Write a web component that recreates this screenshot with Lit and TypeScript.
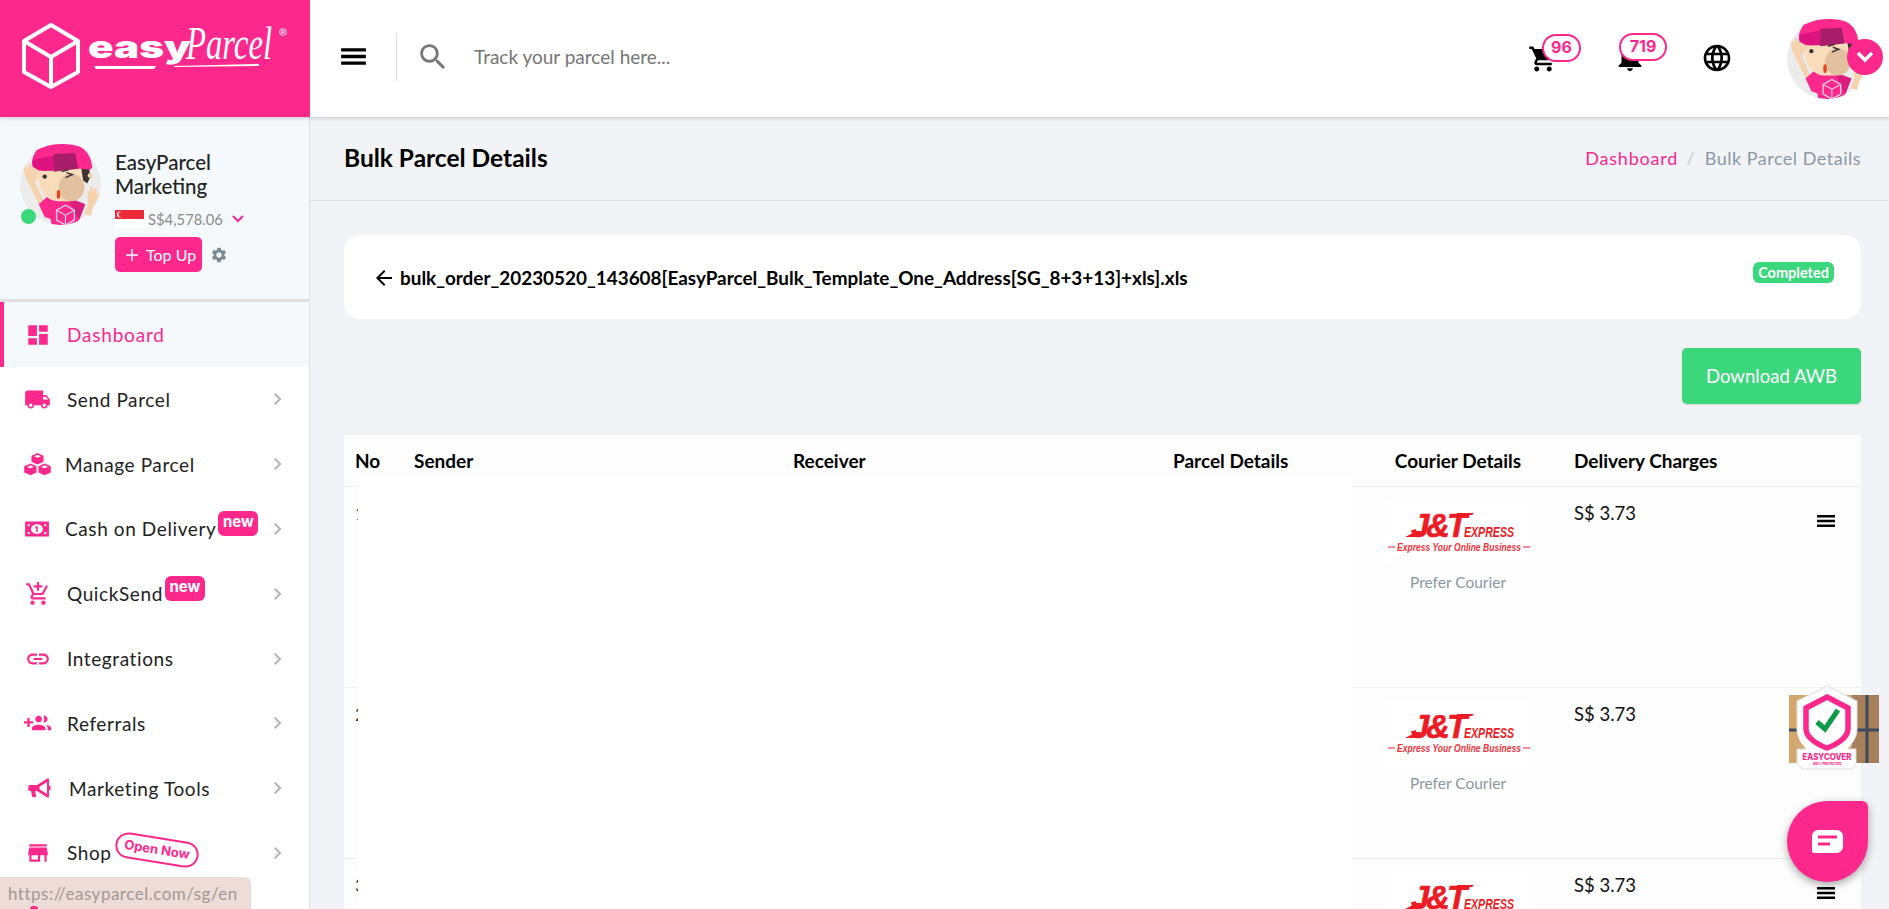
import { LitElement, css, html, svg } from "lit";
import { customElement } from "lit/decorators.js";

const icons: Record<string, any> = {
  dashboard: svg`<path d="M3 13h8V3H3v10zm0 8h8v-6H3v6zm10 0h8V11h-8v10zm0-18v6h8V3h-8z"/>`,
  truck: svg`<path d="M20 8h-3V4H3c-1.100 0-2 .9-2 2v11h2c0 1.660 1.340 3 3 3s3-1.340 3-3h6c0 1.660 1.340 3 3 3s3-1.340 3-3h2v-5l-3-4zM6 18.500c-.83 0-1.500-.67-1.500-1.500s.67-1.500 1.500-1.500 1.500.67 1.500 1.500-.67 1.500-1.500 1.500zm13.500-9l1.960 2.500H17V9.500h2.500zm-1.500 9c-.83 0-1.500-.67-1.500-1.500s.67-1.500 1.500-1.500 1.500.67 1.500 1.500-.67 1.500-1.500 1.500z"/>`,
  cubes: svg`<path d="M12 2.500l5 2.200v5l-5 2.200-5-2.200v-5z"/><path d="M6.200 11.200l5 2.200v5.200l-5 2.300-5.200-2.300v-5.200z"/><path d="M17.800 11.200l5.200 2.200v5.200l-5.200 2.300-5-2.300v-5.200z"/><path fill="#fff" d="M12 4l2.800 1.200L12 6.500 9.200 5.200zM6.200 12.700L9 14l-2.800 1.200L3.400 14zM17.800 12.700l2.900 1.300-2.900 1.200L15 14z"/>`,
  cash: svg`<path fill-rule="evenodd" d="M1 5h22v14H1zM12 7.500c-3.200 0-5.500 2-5.500 4.500s2.300 4.500 5.500 4.500 5.500-2 5.500-4.500-2.300-4.500-5.500-4.500zM3.500 7.500v2c1.200 0 2-.8 2-2zm17 0h-2c0 1.200.8 2 2 2zm-17 9h2c0-1.200-.8-2-2-2zm17 0v-2c-1.200 0-2 .8-2 2z"/><path d="M11 9.500h1.700v5h-1.500v-3.500l-.8.3v-1.100z"/>`,
  cartPlus: svg`<path d="M11 9h2V6h3V4h-3V1h-2v3H8v2h3v3zm-4 9c-1.100 0-1.990.9-1.990 2S5.900 22 7 22s2-.9 2-2-.9-2-2-2zm10 0c-1.100 0-1.990.9-1.990 2s.89 2 1.990 2 2-.9 2-2-.9-2-2-2zm-9.830-3.250l.03-.12.9-1.630h7.450c.75 0 1.410-.41 1.750-1.030l3.860-7.010L19.420 4h-.01l-1.100 2-2.760 5H8.530l-.13-.27L6.160 6l-.95-2-.94-2H1v2h2l3.600 7.590-1.350 2.450c-.16.28-.25.61-.25.96 0 1.100.9 2 2 2h12v-2H7.420c-.13 0-.25-.11-.25-.25z"/>`,
  link: svg`<path d="M3.900 12c0-1.710 1.390-3.100 3.100-3.100h4V7H7c-2.760 0-5 2.240-5 5s2.240 5 5 5h4v-1.900H7c-1.710 0-3.100-1.390-3.100-3.100zM8 13h8v-2H8v2zm9-6h-4v1.900h4c1.710 0 3.100 1.390 3.100 3.100s-1.390 3.100-3.100 3.100h-4V17h4c2.760 0 5-2.240 5-5s-2.240-5-5-5z"/>`,
  groupAdd: svg`<path d="M8 10H5V7H3v3H0v2h3v3h2v-3h3v-2zm10 1c1.660 0 2.990-1.340 2.990-3S19.660 5 18 5c-.32 0-.63.05-.91.14.57.81.9 1.790.9 2.860s-.34 2.040-.9 2.860c.28.09.59.14.91.14zm-5 0c1.660 0 2.990-1.340 2.990-3S14.660 5 13 5s-3 1.340-3 3 1.340 3 3 3zm6.620 2.160c.83.73 1.380 1.660 1.380 2.840v2h3v-2c0-1.540-2.370-2.490-4.380-2.840zM13 13c-2 0-6 1-6 3v2h12v-2c0-2-4-3-6-3z"/>`,
  horn: svg`<path fill-rule="evenodd" d="M22 2.500h-1.800L10 9H3c-1 0-1.700.8-1.700 1.800v2.400c0 1 .7 1.800 1.700 1.800h1l1.300 6h4l-1.200-6H10l10.200 6.500H22zM20 6v12l-7.500-4.700v-2.600z"/><path d="M22 10h1.500v4H22z"/>`,
  store: svg`<path d="M20 4H4v2h16V4zm1 10v-2l-1-5H4l-1 5v2h1v6h10v-6h4v6h2v-6h1zm-9 4H6v-4h6v4z"/>`,
  chevron: svg`<path d="M9 5l7 7-7 7" fill="none" stroke="currentColor" stroke-width="3"/>`,
  search: svg`<path d="M15.500 14h-.79l-.28-.27C15.410 12.590 16 11.110 16 9.500 16 5.910 13.090 3 9.500 3S3 5.910 3 9.500 5.910 16 9.500 16c1.610 0 3.090-.59 4.230-1.570l.27.28v.79l5 4.990L20.490 19l-4.990-5zm-6 0C7.010 14 5 11.990 5 9.500S7.010 5 9.500 5 14 7.010 14 9.500 11.990 14 9.500 14z"/>`,
  menu: svg`<path d="M3 18h18v-2.400H3zm0-4.800h18v-2.400H3zM3 6v2.400h18V6z"/>`,
  cart: svg`<path d="M7 18c-1.100 0-1.990.9-1.990 2S5.900 22 7 22s2-.9 2-2-.9-2-2-2zM1 2v2h2l3.600 7.590-1.350 2.450c-.16.29-.25.62-.25.96 0 1.100.9 2 2 2h12v-2H7.420c-.14 0-.25-.11-.25-.25l.03-.12.9-1.630h7.450c.75 0 1.410-.41 1.750-1.030l3.580-6.490A1 1 0 0 0 20 4H5.210l-.94-2H1zm16 16c-1.100 0-1.990.9-1.990 2s.89 2 1.990 2 2-.9 2-2-.9-2-2-2z"/>`,
  bell: svg`<path d="M12 22c1.100 0 2-.9 2-2h-4c0 1.100.89 2 2 2zm6-6v-5c0-3.070-1.640-5.640-4.500-6.320V4c0-.83-.67-1.500-1.500-1.500s-1.500.67-1.500 1.500v.68C7.630 5.360 6 7.920 6 11v5l-2 2v1h16v-1l-2-2z"/>`,
  globe: svg`<path d="M11.990 2C6.470 2 2 6.480 2 12s4.470 10 9.990 10C17.520 22 22 17.520 22 12S17.520 2 11.990 2zm6.930 6h-2.950c-.32-1.250-.78-2.450-1.380-3.560 1.840.63 3.370 1.910 4.330 3.560zM12 4.040c.83 1.200 1.480 2.530 1.910 3.960h-3.820c.43-1.430 1.080-2.760 1.910-3.960zM4.260 14C4.100 13.360 4 12.690 4 12s.1-1.360.26-2h3.380c-.08.66-.14 1.320-.14 2 0 .68.06 1.340.14 2H4.260zm.82 2h2.950c.32 1.250.78 2.450 1.380 3.560-1.840-.63-3.370-1.900-4.330-3.560zm2.950-8H5.080c.96-1.660 2.490-2.930 4.330-3.560C8.810 5.550 8.350 6.750 8.030 8zM12 19.960c-.83-1.200-1.480-2.530-1.910-3.960h3.820c-.43 1.430-1.080 2.760-1.910 3.960zM14.340 14H9.660c-.09-.66-.16-1.320-.16-2 0-.68.07-1.350.16-2h4.680c.09.65.16 1.320.16 2 0 .68-.07 1.340-.16 2zm.25 5.560c.6-1.110 1.060-2.310 1.380-3.560h2.950c-.96 1.650-2.490 2.930-4.330 3.560zM16.360 14c.08-.66.14-1.320.14-2 0-.68-.06-1.340-.14-2h3.380c.16.64.26 1.310.26 2s-.1 1.360-.26 2h-3.380z"/>`,
  gear: svg`<path d="M19.140 12.940c.04-.3.06-.61.06-.94 0-.32-.02-.64-.07-.94l2.030-1.580c.18-.14.23-.41.12-.61l-1.920-3.320c-.12-.22-.37-.29-.59-.22l-2.390.96c-.5-.38-1.030-.7-1.620-.94l-.36-2.540c-.04-.24-.24-.41-.48-.41h-3.840c-.24 0-.43.17-.47.41l-.36 2.540c-.59.24-1.130.57-1.620.94l-2.390-.96c-.22-.08-.47 0-.59.22L2.740 8.870c-.12.21-.08.47.12.61l2.030 1.580c-.05.3-.09.63-.09.94s.02.64.07.94l-2.030 1.580c-.18.14-.23.41-.12.61l1.920 3.320c.12.22.37.29.59.22l2.390-.96c.5.38 1.030.7 1.620.94l.36 2.540c.05.24.24.41.48.41h3.840c.24 0 .44-.17.47-.41l.36-2.540c.59-.24 1.130-.56 1.620-.94l2.390.96c.22.08.47 0 .59-.22l1.920-3.320c.12-.22.07-.47-.12-.61l-2.010-1.580zM12 15.600c-1.980 0-3.600-1.620-3.600-3.600s1.620-3.600 3.600-3.600 3.600 1.620 3.600 3.600-1.620 3.600-3.600 3.600z"/>`,
  back: svg`<path d="M20 11H7.800l5.600-5.600L12 4l-8 8 8 8 1.400-1.400L7.800 13H20z"/>`,
};

const icon = (name: string, size: number, cls = "") =>
  html`<svg class=${cls} width=${size} height=${size} viewBox="0 0 24 24" fill="currentColor">${icons[name]}</svg>`;

// the winking mascot, drawn in the 110px grid of the sidebar crop
const mascot = (id: string, size: number) => html`
  <svg width=${size} height=${size} viewBox="9 14 82 82">
    <defs><clipPath id=${id}><circle cx="50" cy="55" r="41" /></clipPath></defs>
    <circle cx="50" cy="55" r="41" fill="#ececec" />
    <path d="M13 38l2-2 2 3 0-5 3 0 1 5 2-5 3 1-1 7 3-2 1 2-3 8-2 2 9 20-4 5-12-25-3-6z" fill="#f5d3ae" />
    <path d="M77 62l1-1 2 2 0-6 2 0 1 5 2-4 2 1-1 5 2-1 1 1-3 9-3 4-2 10-7-2 4-11z" fill="#f5d3ae" />
    <g clip-path="url(#${id})">
      <path d="M28 75l9-8 26 3 12 5-7 17-5 9H42l-2-11-6-2z" fill="#fd288c" />
      <path d="M58 70l17 5-6 16z" fill="#d91d7c" />
      <path d="M55 76l9 5v10l-9 5-9-5V81z" fill="none" stroke="#f8d6e6" stroke-width="1.300" />
      <path d="M46 81l9 5 9-5M55 86v10" fill="none" stroke="#f8d6e6" stroke-width="1.100" />
    </g>
    <path d="M27 38h46l2 22-15 12H47c-9 0-18-9-19-19z" fill="#f9dcbc" />
    <path d="M71 38l8 0 1 10-3 6-4-3-1-6z" fill="#3d3330" />
    <circle cx="80" cy="46" r="2.500" fill="#f5d3ae" />
    <ellipse cx="61" cy="58" rx="13" ry="14" fill="#e2c1a0" />
    <path d="M21 34c0-5 2-10 5-14 7-3 15-6 24-6 9 0 17 1 22 4 6 4 10 12 10 20l-2 2-20-2-25 3-7 0-6-4z" fill="#fd288c" />
    <path d="M22 30l21-4v15l-11 0-10-4z" fill="#dd127f" />
    <path d="M43 24l22-1 3 16-25 3z" fill="#a91c69" />
    <circle cx="34" cy="47" r="2.200" fill="#3d3330" />
    <path d="M51 42l7-2M55 48l7-3-6-2" fill="none" stroke="#3d3330" stroke-width="1.500" />
    <ellipse cx="48" cy="65" rx="1.800" ry="4.500" fill="#e8431a" />
  </svg>
`;

const jtLogo = () => html`
  <svg class="jt" width="147" height="68" viewBox="0 0 147 68">
    <rect width="147" height="68" fill="#fff" />
    <path d="M20 39l12-6h4l-2 6z" fill="#ed1c24" />
    <text y="39" class="jt-main"><tspan x="26">J</tspan><tspan x="41">&amp;</tspan><tspan x="62">T</tspan></text>
    <path d="M72 15h17l-2 2H72zM72 18h12l-2 2H72z" fill="#ed1c24" />
    <text x="79" y="39" class="jt-sub" textLength="50" lengthAdjust="spacingAndGlyphs">EXPRESS</text>
    <path d="M3 49h7M138 49h7" stroke="#ed1c24" stroke-width="1.200" />
    <text x="12" y="53" class="jt-tag" textLength="124" lengthAdjust="spacingAndGlyphs">Express Your Online Business</text>
  </svg>
`;

const menuItems = [
  { label: "Dashboard", icon: "dashboard", size: 26, iconX: 25, textX: 67, active: true },
  { label: "Send Parcel", icon: "truck", size: 27, iconX: 24, textX: 67 },
  { label: "Manage Parcel", icon: "cubes", size: 29, iconX: 23, textX: 65 },
  { label: "Cash on Delivery", icon: "cash", size: 26, iconX: 24, textX: 65, badge: "new" },
  { label: "QuickSend", icon: "cartPlus", size: 26, iconX: 25, textX: 67, badge: "new" },
  { label: "Integrations", icon: "link", size: 26, iconX: 25, textX: 67 },
  { label: "Referrals", icon: "groupAdd", size: 27, iconX: 24, textX: 67 },
  { label: "Marketing Tools", icon: "horn", size: 24, iconX: 27, textX: 69 },
  { label: "Shop", icon: "store", size: 26, iconX: 25, textX: 67, pill: "Open Now" },
];

const rows = [
  { no: 1, cls: "row-a" },
  { no: 2, cls: "row-b" },
  { no: 3, cls: "row-c" },
];

@customElement("app-root")
export class AppRoot extends LitElement {
  static styles = css`
    :host {
      --pink: #fd288c;
      --green: #3ad77b;
      display: block;
      position: relative;
      height: 909px;
      overflow: hidden;
      background: #f2f3f7;
      font-family: "Lato", "Liberation Sans", sans-serif;
      color: #111;
    }
    * { box-sizing: border-box; }
    svg { display: block; flex: none; }

    .topbar {
      position: relative;
      z-index: 2;
      display: flex;
      align-items: center;
      height: 117px;
      background: #fff;
      box-shadow: 0 1px 4px rgba(0, 0, 0, 0.2);
    }
    .brand { width: 310px; height: 117px; background: var(--pink); flex: none; }
    .brand text { fill: #fff; }
    .logo-easy { font: 900 31px "Inter", sans-serif; }
    .logo-parcel { font: italic 400 46px "Liberation Serif", serif; }
    .logo-r { font: 700 5px "Liberation Sans", sans-serif; }
    .find { display: flex; align-items: center; padding-bottom: 4px; height: 100%; }
    .burger { margin-left: 27px; color: #000; }
    .divider { width: 1px; height: 48px; background: #ddd; margin-left: 26px; }
    .search { margin-left: 19px; color: #777; }
    .placeholder { margin-left: 24px; font-size: 19px; color: #757575; }
    .tools { margin-left: auto; display: flex; align-items: center; height: 100%; }
    .tool { position: relative; color: #000; }
    .tool.cart { width: 30px; height: 30px; margin-right: 55px; }
    .tool.bell { width: 34px; height: 34px; margin: -3px 54px 0 0; }
    .tool.globe { width: 32px; height: 32px; margin-right: 54px; margin-top: -1px; }
    .count {
      position: absolute;
      height: 28px;
      border: 2px solid var(--pink);
      border-radius: 14px;
      background: #fff;
      color: var(--pink);
      font: 700 16px/22px "Inter", sans-serif;
      text-align: center;
    }
    .cart .count { top: -10px; left: 14px; width: 39px; }
    .bell .count { top: -7px; left: 6px; width: 48px; }
    .me { position: relative; width: 80px; height: 80px; margin-right: 22px; }
    .me-toggle {
      position: absolute;
      top: 20px;
      left: 60px;
      width: 36px;
      height: 36px;
      border-radius: 50%;
      background: var(--pink);
      display: flex;
      align-items: center;
      justify-content: center;
    }

    .layout { display: flex; height: 792px; }
    .sidebar {
      width: 310px;
      flex: none;
      background: #fff;
      border-right: 1px solid #dcdee2;
    }
    .profile {
      display: flex;
      height: 185px;
      padding: 27px 0 0 20px;
      background: #f5f9fc;
      border-bottom: 3px solid #e0e0e0;
    }
    .avatar { position: relative; width: 81px; height: 81px; flex: none; }
    .dot {
      position: absolute;
      left: 1px;
      top: 65px;
      width: 15px;
      height: 15px;
      border-radius: 50%;
      background: var(--green);
    }
    .who { margin-left: 14px; padding-top: 6px; }
    .name { font-size: 20.5px; font-weight: 500; line-height: 24px; color: #222; width: 130px; }
    .balance { display: flex; align-items: center; margin-top: 12px; font-size: 14.8px; color: #8b8b8b; height: 18px; }
    .flag { margin-right: 4px; }
    .caret { margin-left: 9px; color: var(--pink); }
    .actions { display: flex; align-items: center; margin-top: 9px; }
    .topup {
      display: flex;
      align-items: center;
      width: 87px;
      height: 35px;
      padding-left: 10px;
      border-radius: 5px;
      background: var(--pink);
      color: #fff;
      font-size: 16px;
    }
    .topup svg { margin-right: 7px; }
    .actions .gear { margin-left: 8px; color: #7b8994; }

    .item {
      display: flex;
      align-items: center;
      height: 64.8px;
      position: relative;
      font-size: 19px;
      letter-spacing: 0.6px;
      color: #222;
    }
    .item.active { height: 65px; background: #f5f9fc; border-left: 4px solid var(--pink); color: var(--pink); letter-spacing: 0.8px; }
    .item .ico { position: absolute; color: var(--pink); }
    .item .go { position: absolute; left: 268px; color: #b8b8b8; }
    .new {
      margin: 0 0 11px 2px;
      width: 40px;
      height: 25px;
      border-radius: 6px;
      background: var(--pink);
      color: #fff;
      font: 700 15px/22px "Inter", sans-serif;
      letter-spacing: 0;
      text-align: center;
    }
    .pill {
      margin: 0 0 6px 3px;
      width: 84px;
      height: 26px;
      border: 2px solid var(--pink);
      border-radius: 13px;
      background: #fff;
      color: var(--pink);
      font: 700 13px/21px "Inter", sans-serif;
      letter-spacing: 0;
      text-align: center;
      transform: rotate(9deg);
    }

    main { flex: 1; min-width: 0; }
    .crumbs-bar {
      display: flex;
      align-items: center;
      justify-content: space-between;
      height: 84px;
      padding: 0 28px 2px 34px;
      border-bottom: 1px solid #dcdde0;
    }
    h1 { margin: 0; font-size: 24.5px; font-weight: 700; color: #000; }
    .crumbs { display: flex; font-size: 18px; letter-spacing: 0.5px; color: #8c98a6; }
    .crumbs a { color: var(--pink); letter-spacing: 0.8px; }
    .crumbs i { font-style: normal; color: #ccc; margin: 0 10px 0 8px; }
    .content { padding: 34px 28px 0 34px; }
    .file {
      display: flex;
      height: 84px;
      padding: 0 27px 0 28px;
      border-radius: 16px;
      background: #fff;
      align-items: flex-start;
    }
    .file-name {
      display: flex;
      align-items: center;
      height: 84px;
      font-size: 18.9px;
      font-weight: 700;
      color: #000;
    }
    .file-name svg { margin-right: 4px; margin-top: 2px; }
    .status {
      margin: 27px 0 0 auto;
      width: 81px;
      height: 21px;
      border-radius: 6px;
      background: var(--green);
      color: #fff;
      font-size: 14.5px;
      font-weight: 700;
      line-height: 21px;
      text-align: center;
    }
    .bar { display: flex; justify-content: flex-end; margin-top: 29px; }
    .download {
      width: 179px;
      height: 56px;
      border-radius: 5px;
      background: var(--green);
      color: #fff;
      font-size: 18.6px;
      line-height: 56px;
      text-align: center;
      box-shadow: 0 1px 2px rgba(0, 0, 0, 0.12);
    }
    .table { position: relative; margin-top: 31px; background: #fdfdfd; }
    .tr {
      display: grid;
      grid-template-columns: 59px 379px 380px 191px 210px 1fr 56px;
      border-bottom: 1px solid #eeeeee;
    }
    .th { height: 52px; line-height: 51px; font-size: 19px; font-weight: 700; color: #000; }
    .th > div { padding-left: 11px; }
    .th .center { padding: 0; text-align: center; }
    .row-a { height: 201px; }
    .row-b { height: 171px; }
    .row-c { height: 171px; }
    .no { padding: 15px 0 0 11px; font-size: 18px; line-height: 22px; color: #333; }
    .courier { display: flex; flex-direction: column; align-items: center; padding-top: 11px; }
    .prefer { margin-top: 6px; font-size: 15.5px; line-height: 20px; color: #8a97a2; }
    .charge { padding: 15px 0 0 11px; font-size: 18.5px; line-height: 22px; color: #111; }
    .act { padding: 22px 0 0 9px; color: #000; }
    .jt { font-family: "Liberation Sans", sans-serif; }
    .jt-main { font-size: 33px; font-weight: 700; font-style: italic; fill: #ed1c24; stroke: #ed1c24; stroke-width: 0.6px; }
    .jt-sub { font-size: 14px; font-weight: 700; font-style: italic; fill: #ed1c24; }
    .jt-tag { font-size: 11.5px; font-weight: 700; font-style: italic; fill: #f0323a; }
    .redact { position: absolute; left: 14px; top: 42px; width: 994px; height: 500px; background: #fff; }

    .easycover { position: absolute; left: 1780px; top: 680px; }
    .easycover text { text-anchor: middle; font-family: "Inter", sans-serif; font-weight: 800; fill: var(--pink); }
    .chat {
      position: absolute;
      left: 1787px;
      top: 801px;
      width: 81px;
      height: 81px;
      border-radius: 50% 6px 50% 50%;
      background: var(--pink);
      box-shadow: 0 3px 8px rgba(0, 0, 0, 0.35);
      display: flex;
      align-items: center;
      justify-content: center;
    }
    .statusbar {
      position: absolute;
      left: 0;
      bottom: 0;
      width: 251px;
      height: 32px;
      border-top-right-radius: 6px;
      background: #eddcd8;
      color: #a39896;
      padding-left: 8px;
      font-size: 17px;
      letter-spacing: 0.5px;
      line-height: 33px;
    }
    .statusbar::after {
      content: "";
      position: absolute;
      left: 30px;
      bottom: 0;
      width: 8px;
      height: 3px;
      border-radius: 3px 3px 0 0;
      background: var(--pink);
    }
  `;

  renderLogo() {
    return html`
      <svg class="brand" width="310" height="117" viewBox="0 0 310 117">
        <path d="M51 25L78 41V72L51 87 24 72V41zM24 41L51 57 78 41M51 57V87" fill="none" stroke="#fff" stroke-width="4" stroke-linejoin="round" />
        <text class="logo-easy" transform="translate(88 58) scale(1.36 1)">easy</text>
        <text x="186" y="59" class="logo-parcel" textLength="86" lengthAdjust="spacingAndGlyphs">Parcel</text>
        <path d="M94 66h62l-2 3H96zM174 66l85-2v2l-85 1z" fill="#fff" />
        <circle cx="283" cy="32" r="3.5" fill="none" stroke="#fff" stroke-width=".8" />
        <text x="281.2" y="34" class="logo-r">R</text>
      </svg>
    `;
  }

  renderProfile() {
    return html`
      <section class="profile">
        <div class="avatar">${mascot("clip-side", 81)}<span class="dot"></span></div>
        <div class="who">
          <div class="name">EasyParcel Marketing</div>
          <div class="balance">
            <svg class="flag" width="29" height="18" viewBox="0 0 29 18">
              <rect width="29" height="9" fill="#ed2939" />
              <rect y="9" width="29" height="9" fill="#fff" />
              <circle cx="5" cy="4.5" r="3" fill="#fff" />
              <circle cx="6.2" cy="4.5" r="2.7" fill="#ed2939" />
            </svg>
            S$4,578.06
            <svg class="caret" width="12" height="8" viewBox="0 0 12 8"><path d="M1 1l5 5 5-5" fill="none" stroke="currentColor" stroke-width="2" /></svg>
          </div>
          <div class="actions">
            <div class="topup">
              <svg width="14" height="14" viewBox="0 0 14 14"><path d="M7 1v12M1 7h12" stroke="#fff" stroke-width="1.4" /></svg>
              Top Up
            </div>
            ${icon("gear", 18, "gear")}
          </div>
        </div>
      </section>
    `;
  }

  renderMenu() {
    return menuItems.map((m) => {
      const shift = m.active ? 4 : 0;
      return html`
        <div class="item ${m.active ? "active" : ""}" style="padding-left:${m.textX - shift}px">
          <span class="ico" style="left:${m.iconX - shift}px">${icon(m.icon, m.size)}</span>
          ${m.label}
          ${m.badge ? html`<span class="new">${m.badge}</span>` : ""}
          ${m.pill ? html`<span class="pill">${m.pill}</span>` : ""}
          ${m.active ? "" : html`<span class="go">${icon("chevron", 18)}</span>`}
        </div>
      `;
    });
  }

  renderRow(r: { no: number; cls: string }) {
    return html`
      <div class="tr ${r.cls}">
        <div class="no">${r.no}</div>
        <div></div>
        <div></div>
        <div></div>
        <div class="courier">${jtLogo()}<div class="prefer">Prefer Courier</div></div>
        <div class="charge">S$ 3.73</div>
        <div class="act">${icon("menu", 24)}</div>
      </div>
    `;
  }

  render() {
    return html`
      <header class="topbar">
        ${this.renderLogo()}
        <div class="find">
          ${icon("menu", 33, "burger")}
          <span class="divider"></span>
          ${icon("search", 34, "search")}
          <span class="placeholder">Track your parcel here...</span>
        </div>
        <div class="tools">
          <div class="tool cart">${icon("cart", 30)}<span class="count">96</span></div>
          <div class="tool bell">${icon("bell", 34)}<span class="count">719</span></div>
          <div class="tool globe">${icon("globe", 32)}</div>
          <div class="me">
            ${mascot("clip-top", 80)}
            <span class="me-toggle">
              <svg width="18" height="12" viewBox="0 0 18 12"><path d="M2 2l7 7 7-7" fill="none" stroke="#fff" stroke-width="3.5" /></svg>
            </span>
          </div>
        </div>
      </header>
      <div class="layout">
        <aside class="sidebar">
          ${this.renderProfile()}
          ${this.renderMenu()}
        </aside>
        <main>
          <div class="crumbs-bar">
            <h1>Bulk Parcel Details</h1>
            <div class="crumbs"><a>Dashboard</a><i>/</i><span>Bulk Parcel Details</span></div>
          </div>
          <div class="content">
            <div class="file">
              <div class="file-name">
                ${icon("back", 24)}bulk_order_20230520_143608[EasyParcel_Bulk_Template_One_Address[SG_8+3+13]+xls].xls
              </div>
              <div class="status">Completed</div>
            </div>
            <div class="bar"><div class="download">Download AWB</div></div>
            <div class="table">
              <div class="tr th">
                <div>No</div>
                <div>Sender</div>
                <div>Receiver</div>
                <div>Parcel Details</div>
                <div class="center">Courier Details</div>
                <div>Delivery Charges</div>
                <div></div>
              </div>
              ${rows.map((r) => this.renderRow(r))}
              <div class="redact"></div>
            </div>
          </div>
        </main>
      </div>
      <svg class="easycover" width="105" height="100" viewBox="0 0 105 100">
        <rect x="9" y="15" width="63" height="68" fill="#d4a76f" />
        <rect x="72" y="15" width="27" height="68" fill="#a87f5b" />
        <path d="M9 50h90M87 15v68" stroke="#3c4a5e" stroke-width="3" />
        <path d="M47 6l30 15v29c0 8-6 14-9 19h8v15l-4 5H22l-5-5V69h9c-4-5-9-11-9-19V21z" fill="#fff" stroke="#ddd" stroke-width="1" />
        <path d="M47 17l21 11v21c0 8-10 15-21 19-11-4-21-11-21-19V28z" fill="none" stroke="#fd288c" stroke-width="5.5" />
        <path d="M37 42l8 7 13-19" fill="none" stroke="#0a9a48" stroke-width="5" />
        <text x="47" y="80" font-size="8.5" textLength="49" lengthAdjust="spacingAndGlyphs">EASYCOVER</text>
        <text x="47" y="85" font-size="3.2">100% PROTECTED</text>
      </svg>
      <div class="chat">
        <svg width="31" height="23" viewBox="0 0 31 23">
          <path d="M6 0h19c3 0 6 3 6 6v10c0 4-3 7-6 7H2c-1 0-2-1-2-2V6c0-3 3-6 6-6z" fill="#fff" />
          <path d="M6 7h19M6 14h12" stroke="#fd288c" stroke-width="3" />
        </svg>
      </div>
      <div class="statusbar">https://easyparcel.com/sg/en</div>
    `;
  }
}
